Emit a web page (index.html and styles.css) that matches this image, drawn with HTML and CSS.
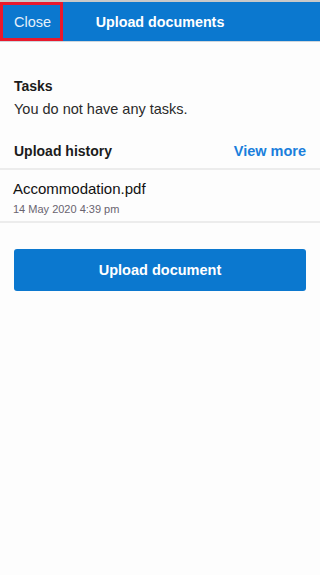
FILE: index.html
```html
<!DOCTYPE html>
<html>
<head>
<meta charset="utf-8">
<link rel="stylesheet" href="styles.css">
</head>
<body>
<div class="screen">
  <header class="topbar">
    <div class="close-btn">Close</div>
    <div class="title">Upload documents</div>
  </header>
  <section class="tasks">
    <div class="heading">Tasks</div>
    <div class="empty">You do not have any tasks.</div>
  </section>
  <div class="history-head">
    <div class="heading">Upload history</div>
    <div class="link">View more</div>
  </div>
  <div class="file-row">
    <div class="file-name">Accommodation.pdf</div>
    <div class="file-date">14 May 2020 4:39 pm</div>
  </div>
  <div class="actions">
    <button class="upload">Upload document</button>
  </div>
</div>
</body>
</html>
```
FILE: styles.css
```css
html, body {
  margin: 0;
  padding: 0;
  background: #fdfdfd;
}
body {
  font-family: "Liberation Sans", Arial, sans-serif;
  color: #1b1b1b;
}
.screen {
  width: 320px;
  height: 575px;
  border-top: 2px solid #c9c9c9;
  box-sizing: border-box;
  background: #fdfdfd;
}
.topbar {
  position: relative;
  height: 39px;
  background: #0b78cf;
  border-bottom: 1px solid #cfd6dc;
  display: flex;
  align-items: center;
  justify-content: center;
  color: #fff;
}
.close-btn {
  position: absolute;
  left: 0;
  top: 0;
  width: 63px;
  height: 39px;
  box-sizing: border-box;
  border: 3px solid #e8192c;
  display: flex;
  align-items: center;
  padding-left: 11px;
  font-size: 14.5px;
  color: #e6f0fa;
}
.title {
  font-size: 14.3px;
  font-weight: bold;
}
.tasks {
  padding: 36px 14px 0 14px;
}
.heading {
  font-size: 14px;
  font-weight: bold;
  color: #1b1b1b;
}
.empty {
  margin-top: 7px;
  font-size: 14.5px;
  color: #2a2a2a;
}
.history-head {
  display: flex;
  justify-content: space-between;
  align-items: baseline;
  padding: 26px 14px 9px 14px;
  border-bottom: 2px solid #ececec;
}
.link {
  color: #1a7fdc;
  font-size: 14.5px;
  font-weight: bold;
}
.file-row {
  padding: 10px 13px 6px 13px;
  border-bottom: 2px solid #ececec;
}
.file-name {
  font-size: 15px;
  color: #111;
}
.file-date {
  margin-top: 6px;
  font-size: 11px;
  color: #6a6470;
}
.actions {
  padding: 26px 14px 0 14px;
}
.upload {
  width: 100%;
  height: 42px;
  border: none;
  border-radius: 3px;
  background: #0b78cf;
  color: #fff;
  font-family: "Liberation Sans", Arial, sans-serif;
  font-size: 14.5px;
  font-weight: bold;
}
```
